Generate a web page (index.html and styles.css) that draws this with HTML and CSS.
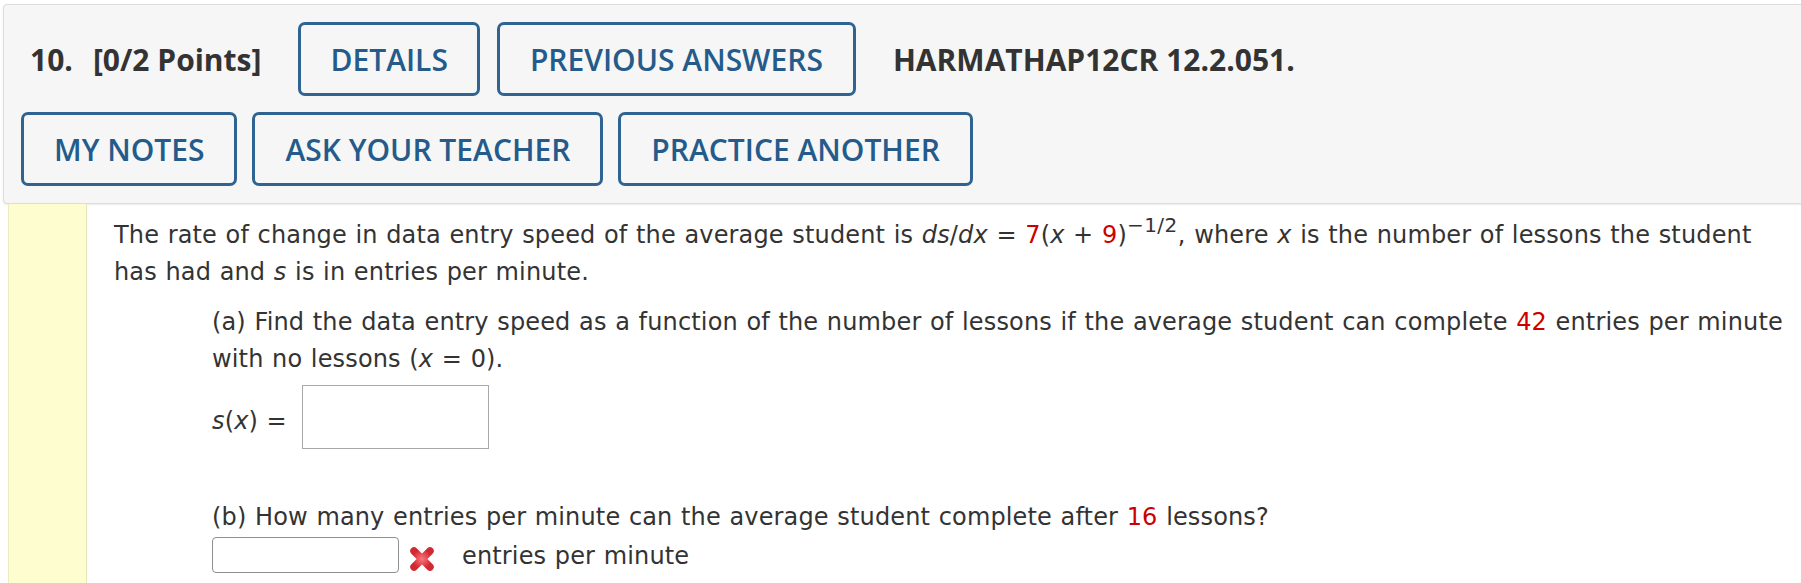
FILE: index.html
```html
<!DOCTYPE html>
<html lang="en">
<head>
<meta charset="utf-8">
<title>Question 10</title>
<link rel="stylesheet" href="styles.css">
</head>
<body>
<div class="header">
  <div class="row row-top">
    <div class="qlabel"><span class="qnum">10.</span><span class="qpts">[0/2 Points]</span></div>
    <div class="btn-group">
      <button class="btn">DETAILS</button>
      <button class="btn">PREVIOUS ANSWERS</button>
    </div>
    <div class="qcode">HARMATHAP12CR 12.2.051.</div>
  </div>
  <div class="row row-bottom">
    <button class="btn">MY NOTES</button>
    <button class="btn">ASK YOUR TEACHER</button>
    <button class="btn">PRACTICE ANOTHER</button>
  </div>
</div>
<div class="content">
  <div class="strip"></div>
  <div class="question">
    <p class="para">The rate of change in data entry speed of the average student is <i>ds</i>/<i>dx</i> = <span class="red">7</span>(<i>x</i> + <span class="red">9</span>)<span class="sup">&minus;1/2</span>, where <i>x</i> is the number of lessons the student<br>has had and <i>s</i> is in entries per minute.</p>
    <div class="part">
      <p class="para">(a) Find the data entry speed as a function of the number of lessons if the average student can complete <span class="red">42</span> entries per minute<br>with no lessons (<i>x</i> = 0).</p>
      <div class="answer-row">
        <span class="ans-label"><i>s</i>(<i>x</i>) =</span>
        <span class="big-input"></span>
      </div>
      <p class="para part-b">(b) How many entries per minute can the average student complete after <span class="red">16</span> lessons?</p>
      <div class="answer-row2">
        <span class="small-input"></span>
        <svg class="xmark" width="26" height="26" viewBox="0 0 26 26" aria-hidden="true">
          <defs>
            <radialGradient id="xg" cx="50%" cy="50%" r="60%">
              <stop offset="0%" stop-color="#f47a7e"/>
              <stop offset="60%" stop-color="#e8474f"/>
              <stop offset="100%" stop-color="#cf2a33"/>
            </radialGradient>
          </defs>
          <path d="M5 5 L21 21 M21 5 L5 21" stroke="url(#xg)" stroke-width="7.5" stroke-linecap="round" fill="none"/>
        </svg>
        <span class="unit">entries per minute</span>
      </div>
    </div>
  </div>
</div>
</body>
</html>
```
FILE: styles.css
```css
html, body {
  margin: 0;
  padding: 0;
  background: #ffffff;
  overflow: hidden;
}
body {
  font-family: "DejaVu Sans", Verdana, sans-serif;
  color: #333333;
}
.header {
  margin: 4px -30px 0 3px;
  padding: 17px;
  background: #f6f6f6;
  border: 1px solid #dcdcdc;
  border-radius: 4px;
  box-shadow: 0 1px 2px rgba(0,0,0,0.08);
  font-family: "Open Sans", "Liberation Sans", sans-serif;
}
.row {
  display: flex;
  align-items: center;
}
.row-bottom {
  margin-top: 16px;
  gap: 15px;
}
.qlabel {
  font-weight: 700;
  font-size: 30px;
  color: #333333;
  margin-left: 9px;
  white-space: nowrap;
}
.qpts {
  margin-left: 20px;
}
.btn-group {
  display: flex;
  gap: 17px;
  margin-left: 37px;
}
.btn {
  height: 74px;
  box-sizing: border-box;
  padding: 0 30px;
  border: 3px solid #2f6391;
  border-radius: 7px;
  background: #f6f6f6;
  color: #245b8b;
  font-family: "Open Sans", "Liberation Sans", sans-serif;
  font-size: 30px;
  font-weight: 600;
  white-space: nowrap;
  cursor: pointer;
}
.btn-group .btn:first-child {
  padding: 0 29px;
}
.qcode {
  margin-left: 37px;
  font-weight: 700;
  font-size: 30px;
  color: #333333;
  white-space: nowrap;
}
.content {
  display: flex;
  min-height: 380px;
}
.strip {
  width: 77px;
  margin-left: 8px;
  background: #fefdcf;
  border-left: 1px solid #ecebc4;
  border-right: 1px solid #e6e4bb;
}
.question {
  padding: 13px 0 20px 27px;
  font-size: 24px;
  line-height: 37px;
  word-spacing: 0.8px;
  letter-spacing: 0.15px;
}
.para {
  margin: 0;
  white-space: nowrap;
}
.part {
  margin-top: 13px;
  padding-left: 98px;
}
.red {
  color: #cc0000;
}
.sup {
  font-size: 20px;
  vertical-align: 11px;
  line-height: 0;
  letter-spacing: 0.5px;
}
.answer-row {
  display: flex;
  align-items: center;
  margin-top: 7px;
  height: 64px;
}
.ans-label {
  white-space: nowrap;
  margin-top: 8px;
  margin-right: 15px;
}
.big-input {
  display: block;
  width: 187px;
  height: 64px;
  box-sizing: border-box;
  border: 1px solid #a8a8a8;
  background: #ffffff;
}
.part-b {
  margin-top: 50px;
}
.answer-row2 {
  display: flex;
  align-items: center;
  margin-top: 1px;
  height: 36px;
}
.small-input {
  display: block;
  width: 187px;
  height: 36px;
  box-sizing: border-box;
  border: 1px solid #8f8f8f;
  border-radius: 4px;
  background: #ffffff;
}
.xmark {
  display: block;
  margin-left: 10px;
  margin-top: 8px;
}
.unit {
  margin-left: 27px;
  white-space: nowrap;
  margin-top: 2px;
}
```
